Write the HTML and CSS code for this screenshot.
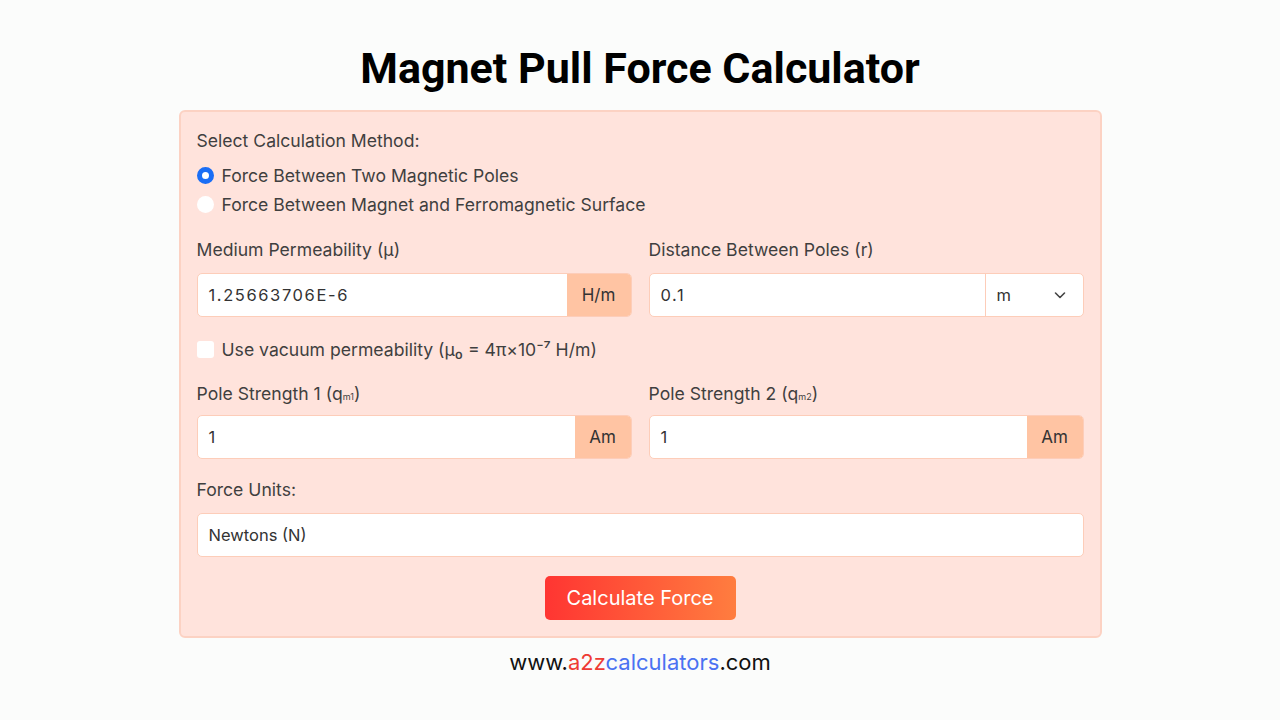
FILE: index.html
```html
<!DOCTYPE html>
<html>

<head>
    <meta charset="utf-8" />
    <title>Magnet Pull Force Calculator</title>
    <meta name="viewport" content="width=device-width, initial-scale=1">
    <link rel="stylesheet" href="styles.css">
</head>

<body>
    <h1 class="title">Magnet Pull Force Calculator</h1>
    <div class="calc-card">
        <div class="label">Select Calculation Method:</div>
        <div class="radio-group">
            <label class="choice">
                <span class="radio checked"></span>
                Force Between Two Magnetic Poles
            </label>
            <label class="choice">
                <span class="radio"></span>
                Force Between Magnet and Ferromagnetic Surface
            </label>
        </div>

        <div class="grid">
            <div class="field">
                <div class="label">Medium Permeability (μ)</div>
                <div class="input-group">
                    <div class="input num">1.25663706E-6</div>
                    <div class="addon addon-hm">H/m</div>
                </div>
            </div>
            <div class="field">
                <div class="label">Distance Between Poles (r)</div>
                <div class="input-group">
                    <div class="input num">0.1</div>
                    <div class="unit-select">
                        <span>m</span>
                        <svg width="14" height="14" viewBox="0 0 14 14">
                            <path d="M2.5 5 L7 9.5 L11.5 5" fill="none" stroke="#444" stroke-width="1.6" stroke-linecap="round" stroke-linejoin="round" />
                        </svg>
                    </div>
                </div>
            </div>
        </div>

        <label class="choice check-row">
            <span class="checkbox"></span>
            Use vacuum permeability (μ₀ = 4π×10⁻⁷ H/m)
        </label>

        <div class="grid grid-poles">
            <div class="field">
                <div class="label">Pole Strength 1 (q<sub>m1</sub>)</div>
                <div class="input-group">
                    <div class="input num">1</div>
                    <div class="addon">Am</div>
                </div>
            </div>
            <div class="field">
                <div class="label">Pole Strength 2 (q<sub>m2</sub>)</div>
                <div class="input-group">
                    <div class="input num">1</div>
                    <div class="addon">Am</div>
                </div>
            </div>
        </div>

        <div class="field force-units">
            <div class="label">Force Units:</div>
            <div class="input-group">
                <div class="input">Newtons (N)</div>
            </div>
        </div>

        <div class="actions">
            <button class="btn-calc" type="button">Calculate Force</button>
        </div>
    </div>

    <div class="site">www.<span class="red">a2z</span><span class="blue">calculators</span>.com</div>
</body>

</html>
```

FILE: styles.css
```css
body {
    margin: 0;
    background: #fbfcfb;
    font-family: Inter, "Noto Sans", sans-serif;
    color: #3a3a3a;
}

.title {
    margin: 0;
    padding-top: 44px;
    height: 66px;
    line-height: 48px;
    text-align: center;
    font-family: Roboto, sans-serif;
    font-weight: 700;
    font-size: 43px;
    color: #000;
}

.calc-card {
    width: 887px;
    margin: 0 auto;
    padding: 17px 16px 16px 16px;
    background: #ffe3dc;
    border: 2px solid #fcd2c3;
    border-radius: 6px;
}

.label {
    font-size: 17.6px;
    line-height: 24px;
    height: 24px;
    color: #3f3f3f;
}

.label sub {
    font-size: 9px;
    vertical-align: baseline;
}

.radio-group {
    margin-top: 8px;
}

.choice {
    display: flex;
    align-items: center;
    height: 29px;
    font-size: 17.6px;
    color: #3f3f3f;
}

.radio {
    width: 17px;
    height: 17px;
    margin-right: 8px;
    border-radius: 50%;
    background: #fff;
    box-sizing: border-box;
}

.radio.checked {
    border: 5px solid #1a6ef5;
}

.grid {
    display: grid;
    grid-template-columns: 1fr 1fr;
    gap: 17px;
    margin-top: 19px;
}

.input-group {
    display: flex;
    height: 44px;
    margin-top: 11px;
    background: #fff;
    border: 1px solid #fdcdb9;
    border-radius: 5px;
    overflow: hidden;
    box-sizing: border-box;
}

.grid-poles {
    margin-top: 21px;
}

.grid-poles .input-group {
    margin-top: 9px;
}

.input {
    flex: 1;
    padding-left: 11px;
    line-height: 42px;
    font-size: 16.5px;
    color: #333;
}

.input.num {
    letter-spacing: 1.6px;
}

.addon {
    width: 56px;
    background: #ffc4a3;
    text-align: center;
    line-height: 42px;
    font-size: 17px;
    color: #333;
}

.addon-hm {
    width: 64px;
}

.unit-select {
    width: 98px;
    display: flex;
    align-items: center;
    justify-content: space-between;
    padding: 0 16px 0 11px;
    border-left: 1px solid #fdcdb9;
    box-sizing: border-box;
    font-size: 16.5px;
    color: #333;
}

.check-row {
    height: 24px;
    margin-top: 20px;
}

.checkbox {
    width: 17px;
    height: 17px;
    margin-right: 8px;
    border-radius: 3px;
    background: #fff;
}

.force-units {
    margin-top: 19px;
}

.actions {
    display: flex;
    justify-content: center;
    margin-top: 19px;
}

.btn-calc {
    width: 191px;
    height: 44px;
    border: none;
    border-radius: 5px;
    background: linear-gradient(to right, #ff3532, #ff7d3f);
    color: #fff;
    font-family: Inter, sans-serif;
    font-size: 20px;
}

.site {
    margin-top: 12px;
    text-align: center;
    font-size: 22px;
    line-height: 24px;
    color: #111;
}

.red {
    color: #ee3b34;
}

.blue {
    color: #4a72f2;
}
```
